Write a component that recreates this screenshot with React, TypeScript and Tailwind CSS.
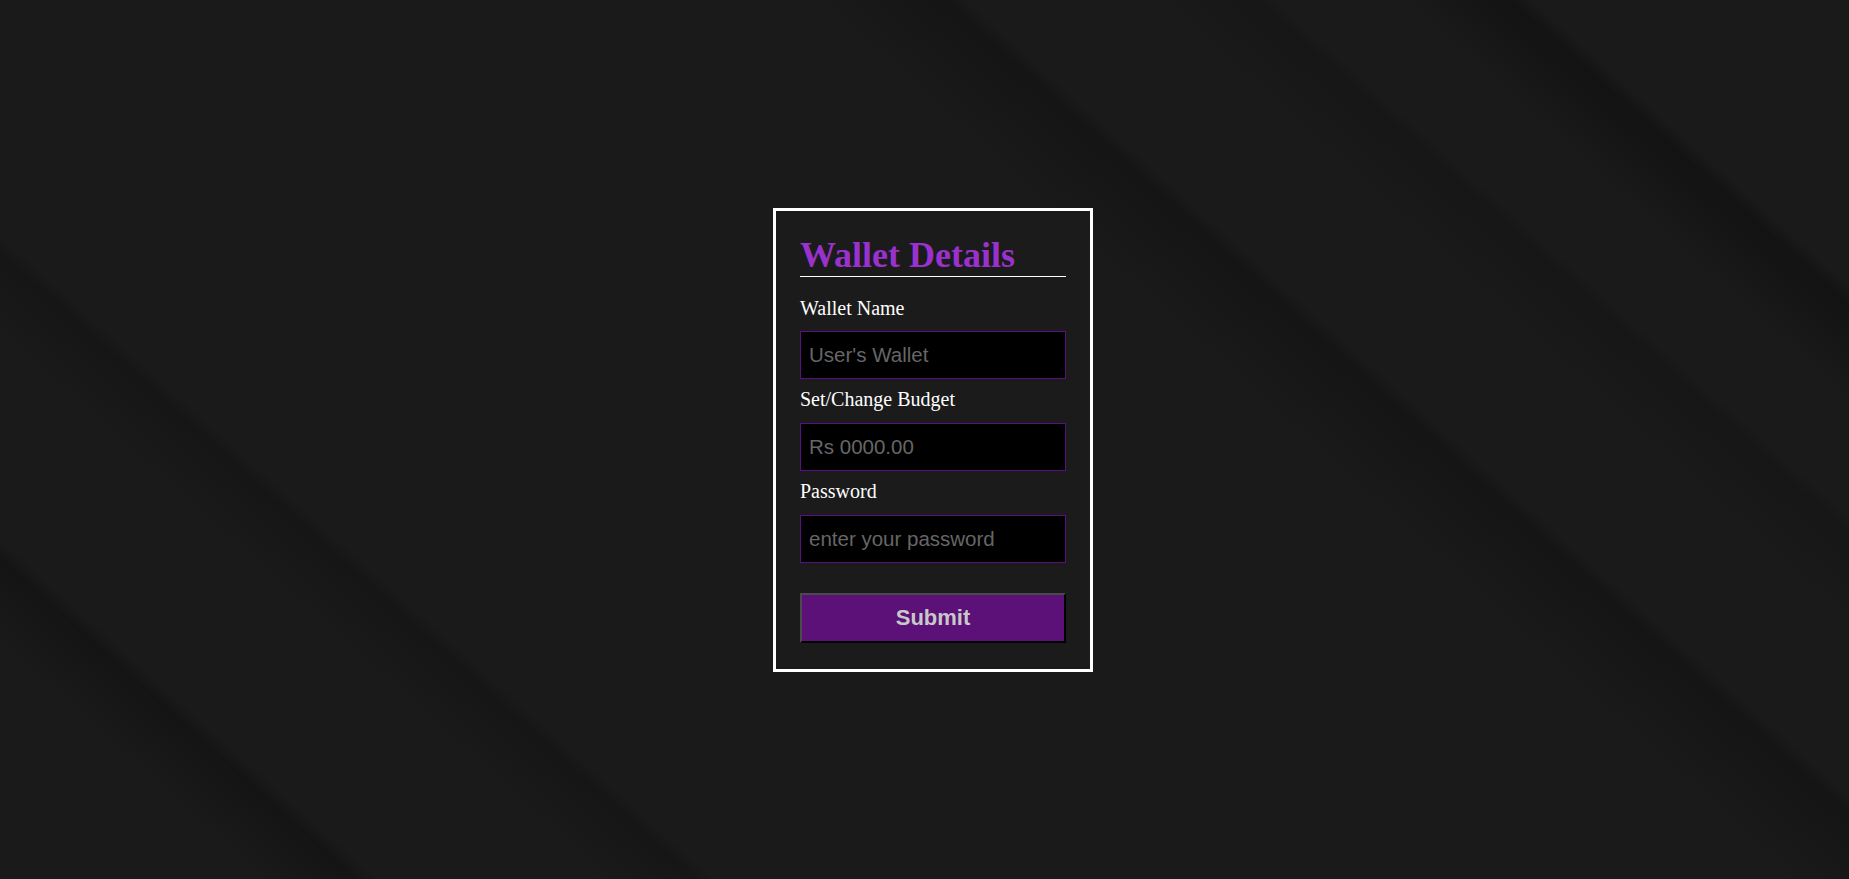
import React from "react";

export default function App() {
  return (
    <div className="h-screen w-full overflow-hidden bg-[#1a1a1a] bg-[linear-gradient(42deg,transparent_9%,rgba(0,0,0,0.22)_12.6%,transparent_13.4%,transparent_21%,rgba(0,0,0,0.16)_24.6%,transparent_25.4%,transparent_63%,rgba(0,0,0,0.2)_68%,transparent_68.8%,transparent_75%,rgba(0,0,0,0.14)_79%,transparent_79.8%,transparent_84%,rgba(0,0,0,0.28)_88%,transparent_88.8%)] flex items-center justify-center pl-[17px]">
      <form
        className="w-[320px] border-[3px] border-white bg-[#1b1b1b] px-[24px] pt-[24px] pb-[26px] flex flex-col"
        onSubmit={(e) => e.preventDefault()}
      >
        <h2 className="font-['Liberation_Serif',serif] font-bold text-[36px] leading-[40px] text-[#9932cc] pb-[1px] border-b border-white m-0">
          Wallet Details
        </h2>

        <label className="mt-[20px] font-['Liberation_Serif',serif] text-[20px] leading-[23px] text-white">
          Wallet Name
        </label>
        <input
          type="text"
          placeholder="User's Wallet"
          className="mt-[11px] h-[48px] w-full bg-black border border-[#5a0f85] px-[8px] font-['Liberation_Sans',Arial,sans-serif] text-[20.5px] text-white placeholder:text-[#666666] outline-none"
        />

        <label className="mt-[9px] font-['Liberation_Serif',serif] text-[20px] leading-[23px] text-white">
          Set/Change Budget
        </label>
        <input
          type="text"
          placeholder="Rs 0000.00"
          className="mt-[12px] h-[48px] w-full bg-black border border-[#5a0f85] px-[8px] font-['Liberation_Sans',Arial,sans-serif] text-[20.5px] text-white placeholder:text-[#666666] outline-none"
        />

        <label className="mt-[9px] font-['Liberation_Serif',serif] text-[20px] leading-[23px] text-white">
          Password
        </label>
        <input
          type="password"
          placeholder="enter your password"
          className="mt-[12px] h-[48px] w-full bg-black border border-[#5a0f85] px-[8px] font-['Liberation_Sans',Arial,sans-serif] text-[20.5px] text-white placeholder:text-[#666666] outline-none"
        />

        <button
          type="submit"
          className="mt-[30px] h-[50px] w-full bg-[#5c1179] border-2 border-t-[#4a4a4a] border-l-[#4a4a4a] border-b-black border-r-black font-['Liberation_Sans',Arial,sans-serif] font-bold text-[22px] text-[#c8c8c8]"
        >
          Submit
        </button>
      </form>
    </div>
  );
}
